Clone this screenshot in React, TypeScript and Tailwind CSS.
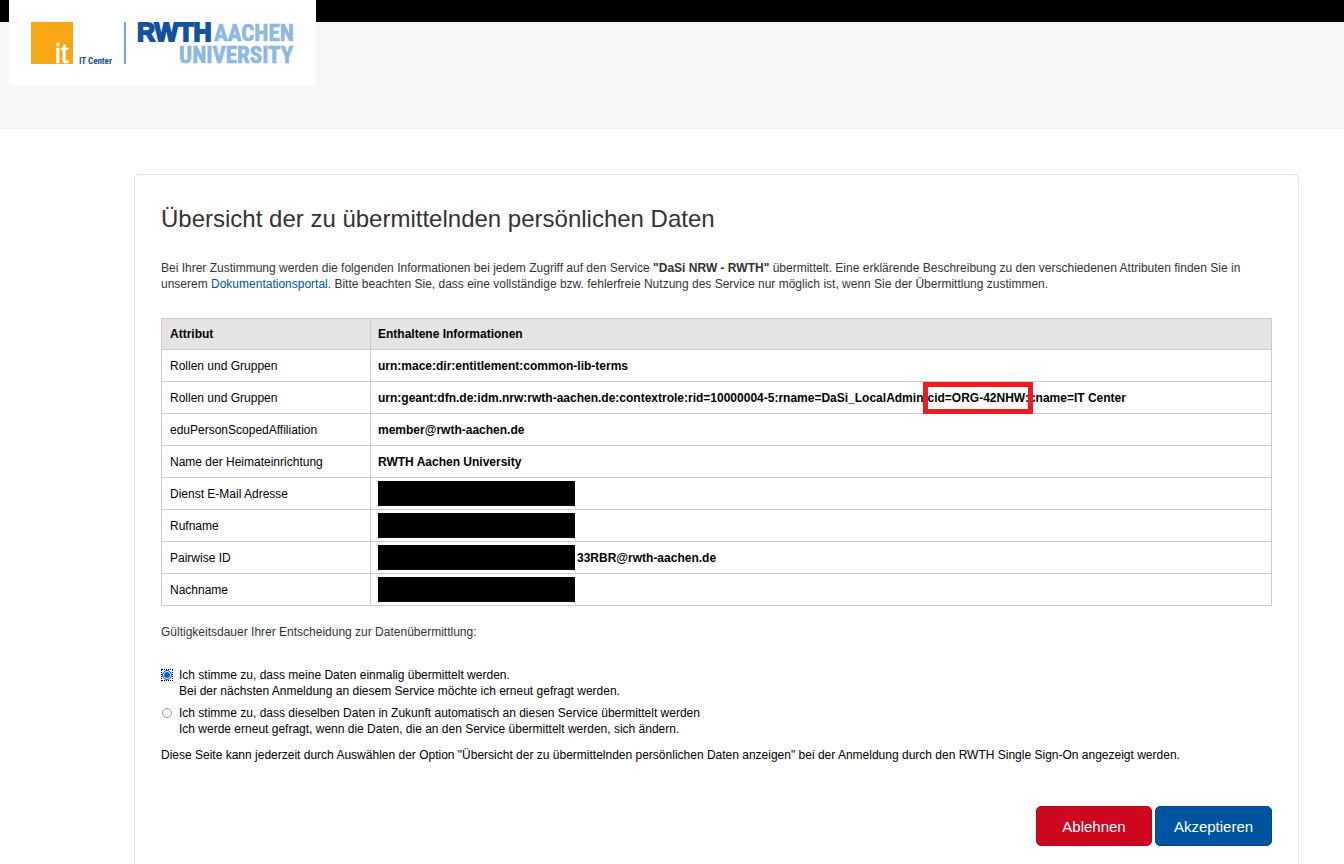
import type { ReactNode } from "react";

function Redacted() {
  return <span className="block h-[25px] w-[197px] shrink-0 bg-black" />;
}

function Highlight({ children }: { children: ReactNode }) {
  return (
    <span className="relative">
      {children}
      <span className="absolute -inset-x-1 -inset-y-[9px] border-[5px] border-[#ed1c24]" />
    </span>
  );
}

const rows: { name: string; value: ReactNode }[] = [
  { name: "Rollen und Gruppen", value: "urn:mace:dir:entitlement:common-lib-terms" },
  {
    name: "Rollen und Gruppen",
    value: (
      <>
        urn:geant:dfn.de:idm.nrw:rwth-aachen.de:contextrole:rid=10000004-5:rname=DaSi_LocalAdmin:
        <Highlight>cid=ORG-42NHW:</Highlight>cname=IT Center
      </>
    ),
  },
  { name: "eduPersonScopedAffiliation", value: "member@rwth-aachen.de" },
  { name: "Name der Heimateinrichtung", value: "RWTH Aachen University" },
  { name: "Dienst E-Mail Adresse", value: <Redacted /> },
  { name: "Rufname", value: <Redacted /> },
  {
    name: "Pairwise ID",
    value: (
      <span className="flex items-center gap-0.5">
        <Redacted />
        33RBR@rwth-aachen.de
      </span>
    ),
  },
  { name: "Nachname", value: <Redacted /> },
];

function Logo() {
  return (
    <svg viewBox="0 0 307 85" className="block h-[85px] w-[307px]" role="img" aria-label="IT Center, RWTH Aachen University">
      <rect width="307" height="85" fill="#fff" />
      <rect x="22" y="22" width="42" height="42" fill="#f6a715" />
      <g fontFamily="'Roboto Condensed', 'Liberation Sans', sans-serif" fontWeight="700">
        <text x="46" y="63" fontSize="27" fontWeight="400" fill="#fff" stroke="#fff" strokeWidth="0.6" fontFamily="'Liberation Sans', sans-serif">it</text>
        <text x="70" y="64" fontSize="9" fill="#16509b">IT Center</text>
        <g fontSize="23" fill="#8db8e0" stroke="#8db8e0" strokeWidth="0.6">
          <text x="205" y="41">AACHEN</text>
          <text x="170" y="63">UNIVERSITY</text>
        </g>
        <text x="128" y="41" fontSize="25" fill="#13529f" stroke="#13529f" strokeWidth="1.8" fontFamily="'Liberation Sans', sans-serif">
          RWTH
        </text>
      </g>
      <rect x="115" y="22" width="2" height="42" fill="#7fa3d0" />
    </svg>
  );
}

function Choice({ checked, children }: { checked?: boolean; children: ReactNode }) {
  return (
    <label className="flex items-start gap-[6px]">
      <span className="mt-0.5 flex size-3 shrink-0 items-center justify-center has-checked:outline has-checked:-outline-offset-1 has-checked:outline-dotted has-checked:outline-black">
        <input
          type="radio"
          name="duration"
          defaultChecked={checked}
          className="size-[10px] appearance-none rounded-full border border-[#8f8f9d] outline-none checked:border-[#0060df] checked:bg-[#0060df] checked:shadow-[inset_0_0_0_1px_white]"
        />
      </span>
      <span>{children}</span>
    </label>
  );
}

export default function App() {
  return (
    <div className="flex min-h-screen flex-col bg-white font-['Liberation_Sans',Arial,sans-serif] text-xs leading-4 text-black">
      <header className="border-t-[22px] border-black bg-[#f6f6f6] pb-11 pl-[9px]">
        <a href="#" className="-mt-[22px] block w-fit">
          <Logo />
        </a>
      </header>

      <main className="mt-[45px] mr-[45px] ml-[134px] flex-1 rounded-t-[5px] border border-b-0 border-[#e3e3e3] px-[26px] pt-7 pb-[18px]">
        <h1 className="text-2xl text-[#333]">Übersicht der zu übermittelnden persönlichen Daten</h1>

        <p className="mt-[25px] text-[#333]">
          Bei Ihrer Zustimmung werden die folgenden Informationen bei jedem Zugriff auf den Service{" "}
          <b>"DaSi NRW - RWTH"</b> übermittelt. Eine erklärende Beschreibung zu den verschiedenen Attributen finden Sie
          in unserem{" "}
          <a href="#" className="text-[#00549f]">
            Dokumentationsportal
          </a>
          . Bitte beachten Sie, dass eine vollständige bzw. fehlerfreie Nutzung des Service nur möglich ist, wenn Sie
          der Übermittlung zustimmen.
        </p>

        <table className="mt-[26px] w-full border-collapse text-left">
          <thead>
            <tr className="h-[31px] bg-[#e4e4e4]">
              <th className="w-[209px] border border-[#ccc] px-2 font-bold">Attribut</th>
              <th className="border border-[#ccc] px-[7px] font-bold">Enthaltene Informationen</th>
            </tr>
          </thead>
          <tbody>
            {rows.map((row, i) => (
              <tr key={i} className="h-8">
                <td className="border border-[#ccc] px-2">{row.name}</td>
                <td className="border border-[#ccc] px-[7px] font-bold">{row.value}</td>
              </tr>
            ))}
          </tbody>
        </table>

        <fieldset className="mt-[18px]">
          <legend className="text-[#333]">Gültigkeitsdauer Ihrer Entscheidung zur Datenübermittlung:</legend>
          <div className="mt-[27px] flex flex-col gap-[6px]">
            <Choice checked>
              Ich stimme zu, dass meine Daten einmalig übermittelt werden.
              <br />
              Bei der nächsten Anmeldung an diesem Service möchte ich erneut gefragt werden.
            </Choice>
            <Choice>
              Ich stimme zu, dass dieselben Daten in Zukunft automatisch an diesen Service übermittelt werden
              <br />
              Ich werde erneut gefragt, wenn die Daten, die an den Service übermittelt werden, sich ändern.
            </Choice>
          </div>
        </fieldset>

        <p className="mt-[10px]">
          Diese Seite kann jederzeit durch Auswählen der Option "Übersicht der zu übermittelnden persönlichen Daten
          anzeigen" bei der Anmeldung durch den RWTH Single Sign-On angezeigt werden.
        </p>

        <div className="mt-[43px] flex justify-end gap-[3px] text-[15px] text-white">
          <button type="button" className="h-10 w-[116px] rounded-[5px] border border-[#b8071a] bg-[#cc071e] pt-0.5">
            Ablehnen
          </button>
          <button type="button" className="h-10 w-[117px] rounded-[5px] border border-[#004b8f] bg-[#00549f] pt-0.5">
            Akzeptieren
          </button>
        </div>
      </main>
    </div>
  );
}
